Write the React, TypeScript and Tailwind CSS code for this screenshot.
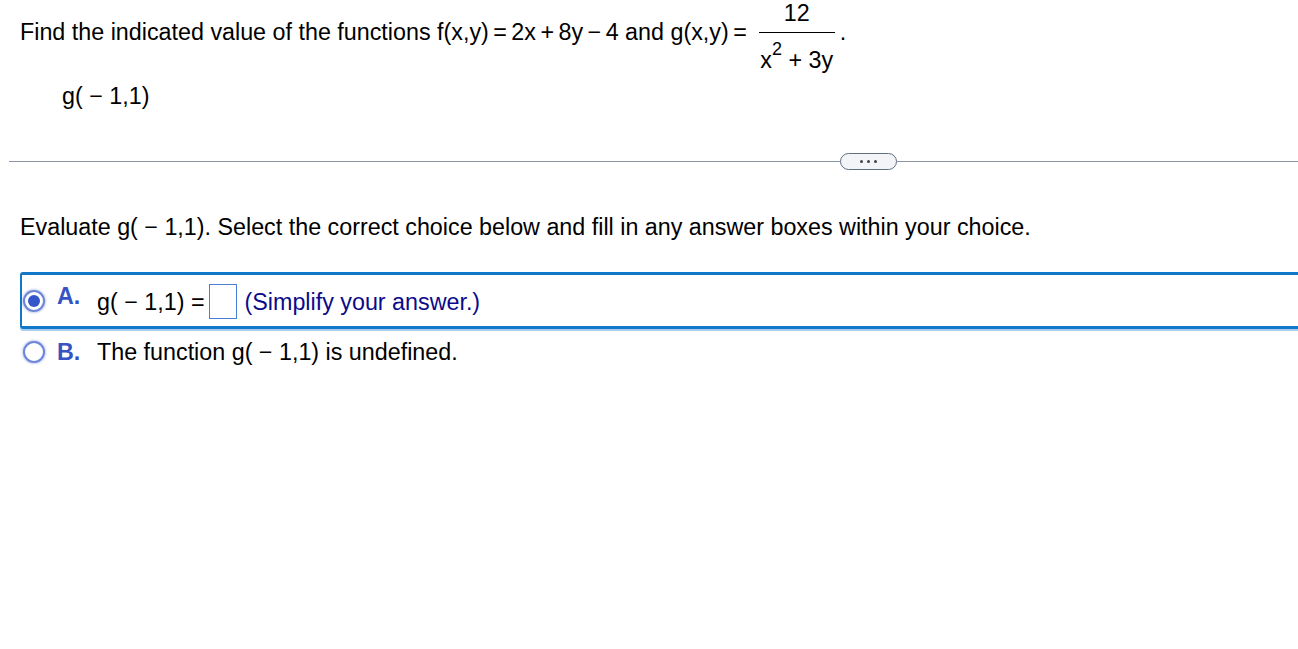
import React from 'react';

function Radio({ checked }: { checked?: boolean }) {
  return (
    <span className="flex h-[22px] w-[22px] shrink-0 items-center justify-center rounded-full border-2 border-[#6d86d8] bg-white shadow-[0_0_2px_1px_rgba(90,120,210,0.35)]">
      {checked && <span className="h-[12px] w-[12px] rounded-full bg-[#3456c8]" />}
    </span>
  );
}

export default function App() {
  return (
    <div
      className="h-[649px] w-full overflow-hidden bg-white text-[23.3px] text-black"
      style={{ fontFamily: '"Liberation Sans", Arial, sans-serif' }}
    >
      {/* question */}
      <div className="flex items-start pl-[20px]">
        <span className="mt-[20px] leading-[24px]">
          Find the indicated value of the functions{' '}
          <span className="[word-spacing:-2px]">f(x,y) = 2x + 8y − 4</span> and{' '}
          <span className="[word-spacing:-2px]">g(x,y) =</span>
        </span>
        <span className="ml-[12px] inline-flex flex-col items-center">
          <span className="mb-[7px] mt-[2px] leading-[23px]">12</span>
          <span className="h-px w-[76px] bg-black" />
          <span className="mt-[16px] leading-[23px]">
            x<span className="relative -top-[13px] text-[18px]">2</span> + 3y
          </span>
        </span>
        <span className="ml-[5px] mt-[20px] leading-[24px]">.</span>
      </div>
      <div className="mt-[10px] pl-[62px] leading-[24px]">g( − 1,1)</div>

      {/* separator */}
      <div className="mt-[45px] flex items-center pl-[9px]">
        <div className="h-px flex-1 bg-[#8a96a3]" />
        <button
          type="button"
          className="flex h-[17px] w-[57px] items-center justify-center gap-[4px] rounded-full border border-[#5f6f82] bg-[#f2f4f7]"
        >
          <span className="h-[3px] w-[3px] rounded-full bg-[#444]" />
          <span className="h-[3px] w-[3px] rounded-full bg-[#444]" />
          <span className="h-[3px] w-[3px] rounded-full bg-[#444]" />
        </button>
        <div className="h-px w-[401px] bg-[#8a96a3]" />
      </div>

      <div className="mt-[45px] pl-[20px] leading-[24px]">
        Evaluate g( − 1,1). Select the correct choice below and fill in any answer boxes within your choice.
      </div>

      {/* choices */}
      <div className="ml-[20px] mt-[33px] flex h-[57px] items-center rounded-l-[3px] border-y-[3px] border-l-2 border-[#1077c9] pl-[1px] shadow-[0_2px_0_#a9cdee]">
        <Radio checked />
        <span className="-mt-[9px] ml-[12px] w-[40px] font-bold leading-[24px] text-[#3553c2]">A.</span>
        <span className="mt-[3px] leading-[24px]">g( − 1,1) =</span>
        <span className="ml-[4px] mt-[2px] h-[35px] w-[28px] border border-[#4a7fd8] bg-white" />
        <span className="ml-[8px] mt-[3px] leading-[24px] text-[#0b0b8a]">(Simplify your answer.)</span>
      </div>
      <div className="ml-[23px] mt-[11px] flex items-center">
        <Radio />
        <span className="ml-[12px] w-[40px] font-bold leading-[24px] text-[#3553c2]">B.</span>
        <span className="leading-[24px]">The function g( − 1,1) is undefined.</span>
      </div>
    </div>
  );
}
